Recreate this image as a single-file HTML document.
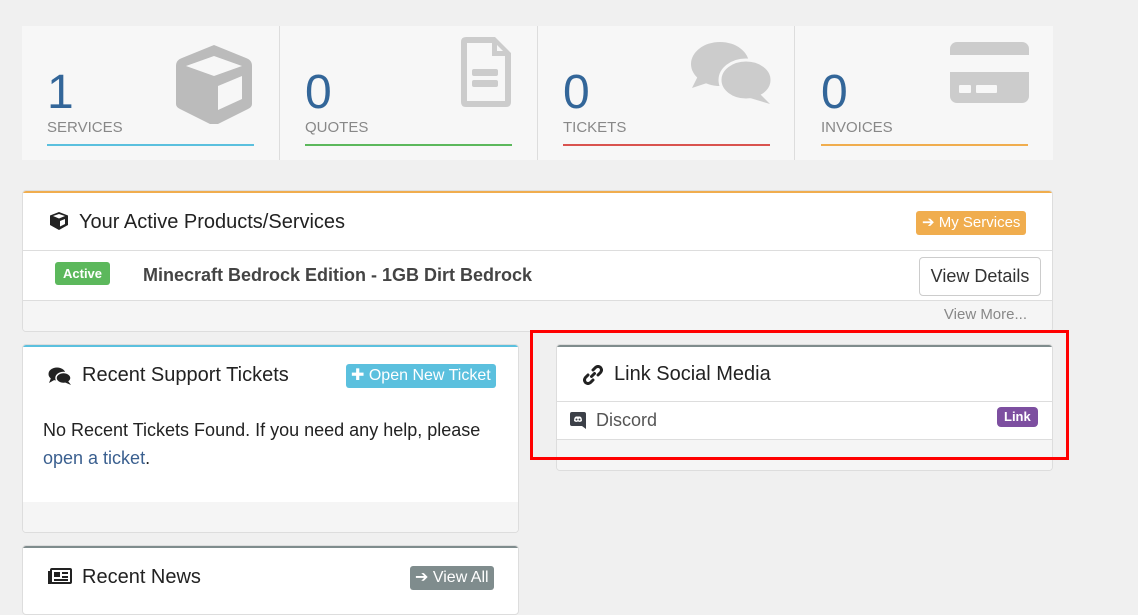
<!DOCTYPE html>
<html><head><meta charset="utf-8"><style>
*{box-sizing:border-box;margin:0;padding:0}
body{width:1138px;height:606px;background:#f0f0f0;font-family:"Liberation Sans",sans-serif;color:#333;position:relative;overflow:hidden}
.abs{position:absolute}
.tiles{left:22px;top:26px;width:1031px;height:134px;background:#f7f7f7}
.sep{position:absolute;top:0;width:1px;height:134px;background:#ddd}
.num{position:absolute;font-size:48px;color:#336699;top:39px;line-height:56px}
.lbl{position:absolute;font-size:15px;color:#888;top:93px}
.ul{position:absolute;top:118px;height:2px;width:207px}
.panel{position:absolute;background:#fff;border:1px solid #ddd;border-radius:4px;overflow:hidden}
.ptop{position:absolute;left:-1px;right:-1px;top:-1px;height:3px}
.ph{position:absolute;font-size:20px;color:#222}
.btn{position:absolute;color:#fff;font-size:15px;border-radius:3px;padding:2px 6px;line-height:20px}
</style></head><body>
<div class="abs tiles">
 <div class="sep" style="left:257px"></div><div class="sep" style="left:515px"></div><div class="sep" style="left:772px"></div>
 <div class="num" style="left:25px">1</div><div class="lbl" style="left:25px">SERVICES</div><div class="ul" style="left:25px;background:#5bc0de"></div>
 <div class="num" style="left:283px">0</div><div class="lbl" style="left:283px">QUOTES</div><div class="ul" style="left:283px;background:#5cb85c"></div>
 <div class="num" style="left:541px">0</div><div class="lbl" style="left:541px">TICKETS</div><div class="ul" style="left:541px;background:#d9534f"></div>
 <div class="num" style="left:799px">0</div><div class="lbl" style="left:799px">INVOICES</div><div class="ul" style="left:799px;background:#f0ad4e"></div>
 <svg class="abs" style="left:152px;top:18px" width="80" height="80" viewBox="0 0 80 80"><path d="M40 1 L72 14 Q78 16 78 22 L78 60 Q78 63 74 65 L42 81 Q40 82 38 81 L6 65 Q2 63 2 60 L2 22 Q2 16 8 14 Z" fill="#bbb"/><path d="M12 22 L40 12 L68 22 L40 32 Z" fill="#f7f7f7"/><path d="M44 42 L68 32 L68 55 L44 66 Z" fill="#f7f7f7"/></svg>
 <svg class="abs" style="left:437px;top:10px" width="54" height="72" viewBox="0 0 54 72"><path d="M4 1 H36 L52 17 V66 Q52 71 47 71 H7 Q2 71 2 66 V6 Q2 1 7 1Z" fill="#ccc"/><path d="M8 7 H33 V20 H46 V65 H8 Z" fill="#f7f7f7"/><path d="M38 9 L44 15 H38Z" fill="#f7f7f7"/><rect x="13" y="33" width="26" height="7" rx="2" fill="#ccc"/><rect x="13" y="44" width="26" height="7" rx="2" fill="#ccc"/></svg>
 <svg class="abs" style="left:668px;top:14px" width="82" height="66" viewBox="0 0 82 66"><ellipse cx="30" cy="24" rx="29" ry="22" fill="#ccc"/><path d="M8 36 L2 48 L20 42Z" fill="#ccc"/><ellipse cx="56" cy="40" rx="26" ry="20" fill="#ccc" stroke="#f7f7f7" stroke-width="3"/><path d="M70 54 L80 64 L60 58Z" fill="#ccc"/></svg>
 <svg class="abs" style="left:928px;top:16px" width="80" height="62" viewBox="0 0 80 62"><rect x="0" y="0" width="79" height="61" rx="7" fill="#ccc"/><rect x="0" y="13" width="79" height="17" fill="#f7f7f7"/><rect x="9" y="43" width="12" height="8" rx="1" fill="#f7f7f7"/><rect x="26" y="43" width="21" height="8" rx="1" fill="#f7f7f7"/></svg>
</div>

<div class="panel" style="left:22px;top:190px;width:1031px;height:142px">
 <div class="ptop" style="background:#f0ad4e"></div>
 <svg class="abs" style="left:26px;top:21px" width="20" height="18" viewBox="0 0 20 18"><path d="M10 0 L19 3.5 V13 L10 18 L1 13 V3.5Z" fill="#222"/><path d="M4 4 L10 2 L16 4 L10 6.5Z" fill="#fff"/><path d="M11 9 L16 7 V12 L11 14.5Z" fill="#fff"/></svg>
 <div class="ph" style="left:56px;top:20px">Your Active Products/Services</div>
 <div class="btn" style="left:893px;top:20px;background:#f0ad4e">➔ My Services</div>
 <div class="abs" style="left:0;right:0;top:59px;height:1px;background:#ddd"></div>
 <div class="abs" style="left:32px;top:71px;background:#5cb85c;color:#fff;font-size:13px;font-weight:bold;border-radius:3px;padding:2px 8px;line-height:19px">Active</div>
 <div class="abs" style="left:120px;top:74px;font-size:18px;font-weight:bold;color:#444">Minecraft Bedrock Edition - 1GB Dirt Bedrock</div>
 <div class="abs" style="left:896px;top:66px;width:122px;height:39px;border:1px solid #ccc;border-radius:4px;font-size:18px;line-height:37px;text-align:center;color:#333">View Details</div>
 <div class="abs" style="left:0;right:0;top:109px;bottom:0;background:#f5f5f5;border-top:1px solid #ddd"></div>
 <div class="abs" style="right:25px;top:115px;font-size:15px;color:#888">View More...</div>
</div>

<div class="panel" style="left:22px;top:344px;width:497px;height:189px">
 <div class="ptop" style="background:#5bc0de"></div>
 <svg class="abs" style="left:25px;top:22px" width="24" height="18" viewBox="0 0 24 18"><ellipse cx="9" cy="7" rx="8.5" ry="6.5" fill="#222"/><path d="M3 11 L1 16 L8 12Z" fill="#222"/><ellipse cx="15.5" cy="11" rx="7.5" ry="5.5" fill="#222" stroke="#fff" stroke-width="1.5"/><path d="M20 14 L23 18 L16 15Z" fill="#222"/></svg>
 <div class="ph" style="left:59px;top:19px">Recent Support Tickets</div>
 <div class="btn" style="left:323px;top:19px;background:#5bc0de;font-size:16px;padding:2px 5px">✚ Open New Ticket</div>
 <div class="abs" style="left:20px;top:71px;font-size:18px;line-height:28px;color:#222">No Recent Tickets Found. If you need any help, please<br><span style="color:#3a5f8f">open a ticket</span>.</div>
 <div class="abs" style="left:0;right:0;top:157px;bottom:0;background:#f5f5f5"></div>
</div>

<div class="panel" style="left:22px;top:545px;width:497px;height:70px">
 <div class="ptop" style="background:#7f8c8d"></div>
 <svg class="abs" style="left:25px;top:22px" width="24" height="16" viewBox="0 0 24 16"><rect x="3" y="1" width="20" height="14" rx="1" fill="none" stroke="#222" stroke-width="2"/><path d="M3 4 H1 V15 H3" fill="none" stroke="#222" stroke-width="2"/><rect x="6" y="4" width="6" height="5" fill="#222"/><rect x="14" y="4" width="6" height="2" fill="#222"/><rect x="14" y="8" width="6" height="2" fill="#222"/><rect x="6" y="11" width="14" height="2" fill="#222"/></svg>
 <div class="ph" style="left:59px;top:20px">Recent News</div>
 <div class="btn" style="left:387px;top:20px;background:#7f8c8d;font-size:16px;padding:2px 5px">➔ View All</div>
</div>

<div class="panel" style="left:556px;top:344px;width:497px;height:127px">
 <div class="ptop" style="background:#7f8c8d"></div>
 <svg class="abs" style="left:26px;top:20px" width="20" height="20" viewBox="0 0 20 20"><g fill="none" stroke="#222" stroke-width="3" stroke-linecap="round"><path d="M8.5 11.5 L11.5 8.5"/><path d="M10 5 L12.5 2.5 Q15 0.5 17.5 2.5 Q19.5 5 17.5 7.5 L15 10"/><path d="M10 15 L7.5 17.5 Q5 19.5 2.5 17.5 Q0.5 15 2.5 12.5 L5 10"/></g></svg>
 <div class="ph" style="left:57px;top:18px">Link Social Media</div>
 <div class="abs" style="left:0;right:0;top:56px;height:1px;background:#ddd"></div>
 <svg class="abs" style="left:13px;top:67px" width="16" height="17" viewBox="0 0 16 17"><path d="M2 0 H14 Q16 0 16 2 V17 L12 14 H2 Q0 14 0 12 V2 Q0 0 2 0Z" fill="#3c4048"/><path d="M4 9 Q4 5 6 4.5 L10 4.5 Q12 5 12 9 L10 10 L8 9.5 L6 10Z" fill="#fff"/><circle cx="6.5" cy="7.5" r="1" fill="#3c4048"/><circle cx="9.5" cy="7.5" r="1" fill="#3c4048"/></svg>
 <div class="abs" style="left:39px;top:65px;font-size:18px;color:#555">Discord</div>
 <div class="abs" style="left:440px;top:62px;background:#7d4fa0;color:#fff;font-size:13px;font-weight:bold;border-radius:4px;padding:1px 7px;line-height:18px">Link</div>
 <div class="abs" style="left:0;right:0;top:94px;bottom:0;background:#f5f5f5;border-top:1px solid #ddd"></div>
</div>

<div class="abs" style="left:530px;top:330px;width:539px;height:130px;border:3px solid #f00"></div>
</body></html>
